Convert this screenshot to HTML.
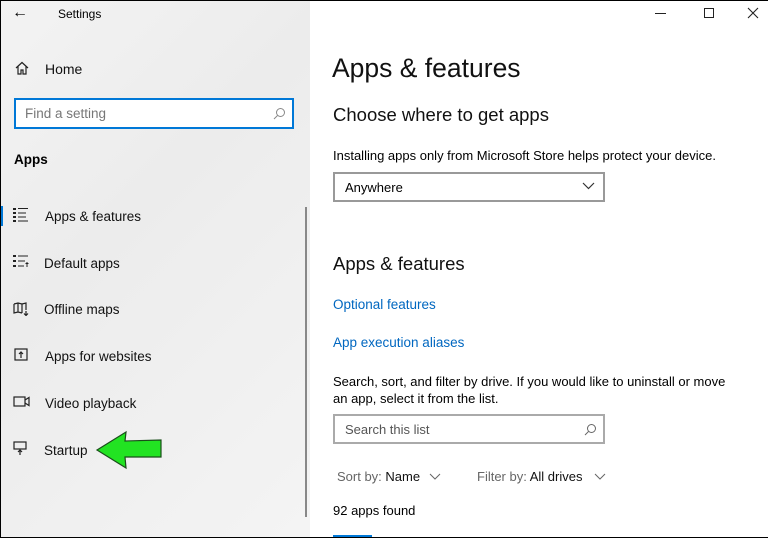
<!DOCTYPE html>
<html><head><style>
*{margin:0;padding:0;box-sizing:border-box}
body{width:768px;height:538px;overflow:hidden;font-family:"Liberation Sans",sans-serif;background:#fff;position:relative;color:#000}
.frame{position:absolute;left:0;top:0;width:768px;height:538px;border-top:1px solid #000;border-left:1px solid #000;border-bottom:1px solid #000}
.side{position:absolute;left:1px;top:1px;width:309px;height:536px;background:linear-gradient(135deg,#f3f3f3,#ececec 40%,#f4f4f4)}
.t{position:absolute;white-space:nowrap}
.nav{font-size:13.5px;color:#111}
.ic{position:absolute}
</style></head><body>
<div class="side"></div>
<div class="t" style="left:12px;top:4px;font-size:16px">&#8592;</div>
<div class="t" style="left:58px;top:7px;font-size:12px">Settings</div>
<svg class="ic" style="left:15px;top:61px" width="14" height="14" viewBox="0 0 14 14" fill="none" stroke="#222" stroke-width="1.2"><path d="M1 7L7 1.5L13 7M3 5.5V13H6V9H8V13H11V5.5"/></svg>
<div class="t nav" style="left:45px;top:61px;font-size:14px">Home</div>
<div style="position:absolute;left:14px;top:98px;width:280px;height:31px;border:2px solid #0078d7;background:#fff"></div>
<div class="t" style="left:25px;top:106px;font-size:13.5px;color:#777">Find a setting</div>
<svg class="ic" style="left:273px;top:107px" width="13" height="13" viewBox="0 0 13 13" fill="none" stroke="#888" stroke-width="1"><circle cx="7.5" cy="5.5" r="4"/><path d="M4.5 8.5L1 12"/></svg>
<div class="t" style="left:14px;top:152px;font-size:13.5px;font-weight:bold">Apps</div>
<div style="position:absolute;left:1px;top:206px;width:2px;height:20px;background:#0078d7"></div>
<svg class="ic" style="left:13px;top:208px" width="16" height="14" viewBox="0 0 16 14" fill="#222"><rect x="0" y="0" width="3" height="2"/><rect x="0" y="4" width="3" height="2"/><rect x="0" y="8" width="3" height="2"/><rect x="0" y="12" width="3" height="2"/><rect x="5" y="0" width="10" height="1"/><rect x="5" y="4.5" width="8" height="1"/><rect x="5" y="8.5" width="8" height="1"/><rect x="5" y="12.5" width="10" height="1"/></svg>
<div class="t nav" style="left:45px;top:209px">Apps &amp; features</div>
<svg class="ic" style="left:13px;top:255px" width="16" height="13" viewBox="0 0 16 13" fill="#222"><rect x="0" y="0" width="3" height="2"/><rect x="0" y="5" width="3" height="2"/><rect x="0" y="10" width="3" height="2"/><rect x="5" y="0.5" width="10" height="1"/><rect x="5" y="5.5" width="7" height="1"/><rect x="5" y="10.5" width="6" height="1"/><path d="M12 9L14 7L16 9H14.5V12H13.5V9Z"/></svg>
<div class="t nav" style="left:44px;top:256px">Default apps</div>
<svg class="ic" style="left:13px;top:302px" width="17" height="14" viewBox="0 0 17 14" fill="none" stroke="#222" stroke-width="1.2"><path d="M1 2L5 1L9 2L13 1V8M1 2V11L5 10L9 11M5 1V10M9 2V11M13 9V13M11 11.5L13 13.5L15 11.5"/></svg>
<div class="t nav" style="left:44px;top:302px">Offline maps</div>
<svg class="ic" style="left:14px;top:348px" width="14" height="13" viewBox="0 0 14 13" fill="none" stroke="#222" stroke-width="1.2"><rect x="1" y="1" width="12" height="11"/><path d="M7 10V4M5 6L7 4L9 6"/></svg>
<div class="t nav" style="left:45px;top:349px">Apps for websites</div>
<svg class="ic" style="left:13px;top:396px" width="17" height="11" viewBox="0 0 17 11" fill="none" stroke="#222" stroke-width="1.2"><rect x="1" y="1" width="11" height="9"/><path d="M12 4L16 1.5V9.5L12 7"/></svg>
<div class="t nav" style="left:45px;top:396px">Video playback</div>
<svg class="ic" style="left:13px;top:441px" width="14" height="15" viewBox="0 0 14 15" fill="none" stroke="#222" stroke-width="1.2"><rect x="1" y="1" width="12" height="7"/><path d="M7 14V9M5 11L7 9L9 11"/></svg>
<div class="t nav" style="left:44px;top:443px">Startup</div>
<svg class="ic" style="left:95px;top:430px" width="68" height="40" viewBox="0 0 68 40"><path d="M2 20L31 2L30 11L66 10L66 27L30 27L31 38Z" fill="#22e322" stroke="#1a4d1a" stroke-width="1.2"/></svg>
<div style="position:absolute;left:305px;top:207px;width:2px;height:310px;background:#888"></div>
<div style="position:absolute;left:655px;top:13px;width:11px;height:1px;background:#222"></div>
<div style="position:absolute;left:704px;top:8px;width:10px;height:10px;border:1px solid #222"></div>
<svg class="ic" style="left:747px;top:7px" width="12" height="12" viewBox="0 0 12 12" stroke="#222" stroke-width="1.1"><path d="M1 1L11 11M11 1L1 11"/></svg>
<div class="t" style="left:332px;top:53px;font-size:26.5px;color:#111">Apps &amp; features</div>
<div class="t" style="left:333px;top:104px;font-size:18.5px;color:#111">Choose where to get apps</div>
<div class="t" style="left:333px;top:148px;font-size:13px">Installing apps only from Microsoft Store helps protect your device.</div>
<div style="position:absolute;left:333px;top:172px;width:272px;height:30px;border:2px solid #999;background:#fff"></div>
<div class="t" style="left:345px;top:180px;font-size:13px">Anywhere</div>
<svg class="ic" style="left:582px;top:182px" width="13" height="8" viewBox="0 0 13 8" fill="none" stroke="#333" stroke-width="1.2"><path d="M1 1L6.5 6.5L12 1"/></svg>
<div class="t" style="left:333px;top:253px;font-size:18.5px;color:#111">Apps &amp; features</div>
<div class="t" style="left:333px;top:297px;font-size:13.5px;color:#0067c0">Optional features</div>
<div class="t" style="left:333px;top:335px;font-size:13.5px;color:#0067c0">App execution aliases</div>
<div class="t" style="left:333px;top:373px;font-size:13px;line-height:17px">Search, sort, and filter by drive. If you would like to uninstall or move<br>an app, select it from the list.</div>
<div style="position:absolute;left:333px;top:414px;width:272px;height:30px;border:2px solid #aaa;background:#fff"></div>
<div class="t" style="left:345px;top:422px;font-size:13px;color:#555">Search this list</div>
<svg class="ic" style="left:584px;top:423px" width="13" height="13" viewBox="0 0 13 13" fill="none" stroke="#666" stroke-width="1"><circle cx="7.5" cy="5.5" r="4"/><path d="M4.5 8.5L1 12"/></svg>
<div class="t" style="left:337px;top:469px;font-size:13px;color:#666">Sort by: <span style="color:#111">Name</span></div>
<svg class="ic" style="left:429px;top:473px" width="12" height="7" viewBox="0 0 12 7" fill="none" stroke="#666"><path d="M1 1L6 6L11 1"/></svg>
<div class="t" style="left:477px;top:469px;font-size:13px;color:#666">Filter by: <span style="color:#111">All drives</span></div>
<svg class="ic" style="left:594px;top:473px" width="12" height="7" viewBox="0 0 12 7" fill="none" stroke="#666"><path d="M1 1L6 6L11 1"/></svg>
<div class="t" style="left:333px;top:503px;font-size:13px">92 apps found</div>
<div style="position:absolute;left:333px;top:535px;width:39px;height:2px;background:#0078d7"></div>
<div class="frame"></div>
</body></html>
